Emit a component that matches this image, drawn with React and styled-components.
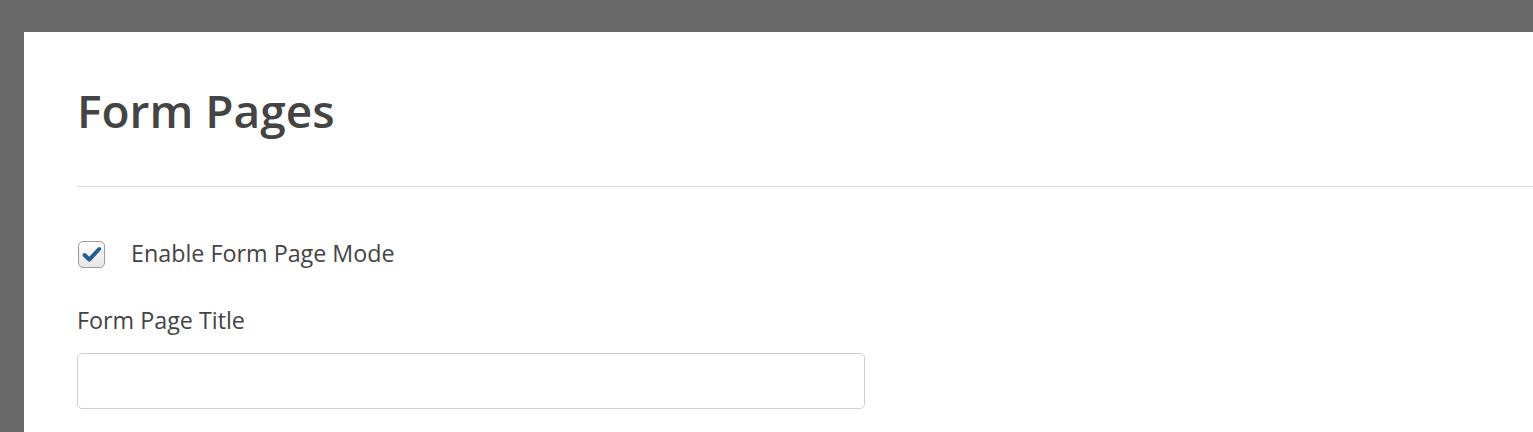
import React from "react";
import styled, { createGlobalStyle } from "styled-components";

const Global = createGlobalStyle`
  html, body { margin: 0; padding: 0; }
  body {
    background: #6a6a6a;
    font-family: "Open Sans", "Noto Sans", sans-serif;
    overflow: hidden;
  }
`;

const Backdrop = styled.div`
  padding: 32px 0 0 24px;
  height: 432px;
  box-sizing: border-box;
`;

const Panel = styled.div`
  background: #fff;
  height: 100%;
  padding: 0 0 0 53px;
  box-sizing: border-box;
`;

const Header = styled.header`
  padding-top: 47px;
  padding-bottom: 45px;
  border-bottom: 1px solid #dcdcdc;
`;

const Title = styled.h1`
  margin: 0;
  font-size: 46px;
  font-weight: 600;
  line-height: 62px;
  color: #444;
`;

const Body = styled.div`
  display: flex;
  flex-direction: column;
  padding-top: 52px;
  width: 788px;
`;

const CheckRow = styled.label`
  display: flex;
  align-items: flex-start;
  gap: 26px;
  height: 29px;
  font-size: 23.3px;
  color: #444;
  line-height: 28px;
  padding-left: 1px;
`;

const Box = styled.span`
  margin-top: 2px;
  width: 27px;
  height: 27px;
  flex: none;
  box-sizing: border-box;
  border: 1px solid #9a9a9a;
  border-radius: 5px;
  background: linear-gradient(#ffffff, #e6e6e6);
  display: flex;
  align-items: center;
  justify-content: center;
`;

const FieldLabel = styled.div`
  margin-top: 37px;
  font-size: 23.3px;
  color: #444;
  line-height: 30px;
`;

const Input = styled.input`
  margin-top: 18px;
  height: 56px;
  box-sizing: border-box;
  border: 1px solid #cfcfcf;
  border-radius: 5px;
  background: #fff;
  width: 788px;
  outline: none;
`;

export default function App() {
  return (
    <>
      <Global />
      <Backdrop>
        <Panel>
          <Header>
            <Title>Form Pages</Title>
          </Header>
          <Body>
            <CheckRow>
              <Box>
                <svg width="20" height="17" viewBox="0 0 20 17">
                  <path d="M2.6 9 L7.3 13.6 L17.2 3" fill="none" stroke="#245f93" strokeWidth="4" strokeLinecap="round" strokeLinejoin="round" />
                </svg>
              </Box>
              Enable Form Page Mode
            </CheckRow>
            <FieldLabel>Form Page Title</FieldLabel>
            <Input type="text" />
          </Body>
        </Panel>
      </Backdrop>
    </>
  );
}
